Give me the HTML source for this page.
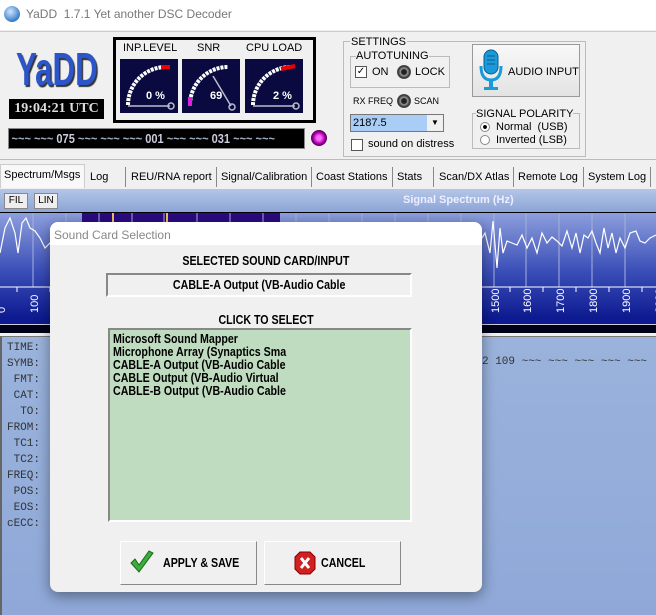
<!DOCTYPE html>
<html><head><meta charset="utf-8"><style>
*{margin:0;padding:0;box-sizing:border-box}
body{width:656px;height:615px;overflow:hidden;background:#f0f0f0;font-family:"Liberation Sans",sans-serif;font-size:12px;position:relative}
.a{position:absolute}
.narrow{font-family:"Liberation Sans",sans-serif;font-weight:bold}
.sq{display:inline-block;transform:scaleX(.82);white-space:nowrap}
.meter{position:absolute;top:59px;width:58px;height:54px;background:#0a0a40}
.tab{position:absolute;top:167px;height:20px;font-size:11px;line-height:20px;border-right:1px solid #888;padding:0 4px;white-space:nowrap;overflow:hidden}
.mono{font-family:"Liberation Mono",monospace;font-size:11px;color:#333}
</style></head><body>
<div class="a" style="left:0;top:0;width:656px;height:30px;background:#fff"></div>
<div class="a" style="left:4px;top:6px;width:16px;height:16px;border-radius:50%;background:radial-gradient(circle at 40% 35%,#cfe6ff,#3a7cc8 70%,#1d4f8f)"></div>
<div class="a" style="left:26px;top:7px;font-size:12px;color:#777">YaDD&nbsp; 1.7.1 Yet another DSC Decoder</div>
<div class="a" style="left:0;top:31px;width:656px;height:1px;background:#ccc"></div>
<div class="a" style="left:16px;top:42px;font-family:'Liberation Sans',sans-serif;font-weight:bold;font-size:46px;color:#2b55c8;text-shadow:2px 2px 1px #333;transform:scaleX(.68);transform-origin:left top;white-space:nowrap">YaDD</div>
<div class="a" style="left:9px;top:99px;width:95px;height:20px;background:#000;color:#ddd;font-family:'Liberation Serif',serif;font-weight:bold;font-size:14px;line-height:20px;text-align:center">19:04:21 UTC</div>
<div class="a" style="left:113px;top:37px;width:203px;height:86px;border:3px solid #000"></div>
<div class="a" style="left:123px;top:42px;font-size:11px">INP.LEVEL</div>
<div class="a" style="left:197px;top:42px;font-size:11px">SNR</div>
<div class="a" style="left:246px;top:42px;font-size:11px">CPU LOAD</div>
<div class="meter" style="left:120px"><svg width="58" height="54"><path d="M8 46 A38 38 0 0 1 46 8" stroke="#fff" stroke-width="4" fill="none" stroke-dasharray="3 1"/><path d="M41 8 L50 8" stroke="#e00" stroke-width="4"/><path d="M8 47 H50" stroke="#bbc" stroke-width="1.5"/><circle cx="51" cy="47" r="3" stroke="#bbc" fill="none" stroke-width="1.5"/><text x="26" y="40" fill="#fff" font-size="11" font-weight="bold" font-family="Liberation Sans">0 %</text></svg></div>
<div class="meter" style="left:182px"><svg width="58" height="54"><path d="M8 46 A38 38 0 0 1 46 8" stroke="#fff" stroke-width="4" fill="none" stroke-dasharray="3 1"/><path d="M8 47 V38" stroke="#e020e0" stroke-width="4"/><path d="M31 17 L49 47" stroke="#bbc" stroke-width="1.5"/><circle cx="50" cy="48" r="3" stroke="#bbc" fill="none" stroke-width="1.5"/><text x="28" y="40" fill="#fff" font-size="11" font-weight="bold" font-family="Liberation Sans">69</text></svg></div>
<div class="meter" style="left:245px"><svg width="58" height="54"><path d="M8 46 A38 38 0 0 1 46 8" stroke="#fff" stroke-width="4" fill="none" stroke-dasharray="3 1"/><path d="M36 10 L50 7" stroke="#e00" stroke-width="4"/><path d="M8 47 H50" stroke="#bbc" stroke-width="1.5"/><circle cx="51" cy="47" r="3" stroke="#bbc" fill="none" stroke-width="1.5"/><text x="28" y="40" fill="#fff" font-size="11" font-weight="bold" font-family="Liberation Sans">2 %</text></svg></div>
<div class="a" style="left:8px;top:128px;width:297px;height:21px;background:#000;border:1px solid #888;overflow:hidden"><div style="color:#9ab;font-weight:bold;font-size:13px;line-height:19px;padding-left:3px;white-space:nowrap;transform:scaleX(.85);transform-origin:left">~~~ ~~~ <span style="color:#ccd">075</span> ~~~ ~~~ ~~~ <span style="color:#ccd">001</span> ~~~ ~~~ <span style="color:#ccd">031</span> ~~~ ~~~</div></div>
<div class="a" style="left:311px;top:130px;width:16px;height:16px;border-radius:50%;background:radial-gradient(circle,#f6f 20%,#a0a 50%,#202 80%)"></div>
<div class="a" style="left:0;top:159px;width:656px;height:1px;background:#bbb"></div>
<div class="a" style="left:343px;top:41px;width:243px;height:116px;border:1px solid #bbb"></div>
<div class="a" style="left:350px;top:36px;background:#f0f0f0;font-size:11px;padding:0 1px">SETTINGS</div>
<div class="a" style="left:350px;top:56px;width:100px;height:32px;border:1px solid #bbb"></div>
<div class="a" style="left:356px;top:50px;background:#f0f0f0;font-size:11px">AUTOTUNING</div>
<div class="a" style="left:355px;top:66px;width:12px;height:12px;border:1px solid #555;background:#fff;font-size:10px;line-height:10px;text-align:center">✓</div>
<div class="a" style="left:372px;top:66px;font-size:11px">ON</div>
<div class="a" style="left:397px;top:65px;width:14px;height:14px;border-radius:50%;background:radial-gradient(circle,#222 25%,#999 35%,#333 60%,#777 80%)"></div>
<div class="a" style="left:415px;top:66px;font-size:11px">LOCK</div>
<div class="a" style="left:353px;top:96px;font-size:9px">RX FREQ</div>
<div class="a" style="left:397px;top:94px;width:14px;height:14px;border-radius:50%;background:radial-gradient(circle,#222 25%,#999 35%,#333 60%,#777 80%)"></div>
<div class="a" style="left:414px;top:96px;font-size:9px">SCAN</div>
<div class="a" style="left:350px;top:114px;width:94px;height:18px;border:1px solid #777;background:#a9cdf5;font-size:11px;line-height:16px;padding-left:2px">2187.5</div>
<div class="a" style="left:427px;top:115px;width:16px;height:16px;background:#f0f0f0;font-size:8px;text-align:center;line-height:16px">▼</div>
<div class="a" style="left:351px;top:139px;width:12px;height:12px;border:1px solid #555;background:#fff"></div>
<div class="a" style="left:368px;top:138px;font-size:11px">sound on distress</div>
<div class="a" style="left:472px;top:44px;width:108px;height:53px;border:1px solid #999;background:linear-gradient(#f8f8f8,#e3e3e3)"></div>
<svg class="a" style="left:478px;top:48px" width="26" height="46"><rect x="6" y="2" width="14" height="24" rx="7" fill="#1a9ad8" stroke="#0a5a90"/><path d="M9 8h8M9 12h8M9 16h8" stroke="#0a5a90"/><path d="M3 18 Q3 32 13 32 Q23 32 23 18" stroke="#1a9ad8" stroke-width="3" fill="none"/><rect x="11" y="32" width="4" height="7" fill="#1a9ad8"/><rect x="6" y="39" width="14" height="3" fill="#1a9ad8"/></svg>
<div class="a" style="left:508px;top:66px;font-size:11px">AUDIO INPUT</div>
<div class="a" style="left:472px;top:113px;width:108px;height:36px;border:1px solid #bbb"></div>
<div class="a" style="left:476px;top:108px;background:#f0f0f0;font-size:11px">SIGNAL POLARITY</div>
<div class="a" style="left:480px;top:122px;width:10px;height:10px;border:1px solid #888;border-radius:50%;background:radial-gradient(circle,#000 30%,#fff 40%)"></div>
<div class="a" style="left:496px;top:121px;font-size:11px">Normal&nbsp; (USB)</div>
<div class="a" style="left:480px;top:135px;width:10px;height:10px;border:1px solid #888;border-radius:50%;background:#fff"></div>
<div class="a" style="left:496px;top:134px;font-size:11px">Inverted (LSB)</div>
<div class="a" style="left:0;top:163px;width:656px;height:26px;background:#f0f0f0"></div>
<div class="a" style="left:0;top:164px;width:85px;height:24px;background:#f8f8f8;border:1px solid #ccc;border-bottom:none"></div>
<div class="a" style="left:4px;top:169px;font-size:11px">Spectrum/Msgs</div>
<div class="tab" style="left:86px;width:40px">Log</div>
<div class="tab" style="left:127px;width:90px">REU/RNA report</div>
<div class="tab" style="left:217px;width:95px">Signal/Calibration</div>
<div class="tab" style="left:312px;width:81px">Coast Stations</div>
<div class="tab" style="left:393px;width:41px">Stats</div>
<div class="tab" style="left:435px;width:79px">Scan/DX Atlas</div>
<div class="tab" style="left:514px;width:70px">Remote Log</div>
<div class="tab" style="left:584px;width:67px">System Log</div>
<div class="a" style="left:0;top:189px;width:656px;height:24px;background:linear-gradient(#b4c6e8,#8aa3d6)"></div>
<div class="a" style="left:4px;top:193px;width:24px;height:16px;background:#eee;border:1px solid #888;font-size:10px;text-align:center;line-height:14px">FIL</div>
<div class="a" style="left:34px;top:193px;width:24px;height:16px;background:#eee;border:1px solid #888;font-size:10px;text-align:center;line-height:14px">LIN</div>
<div class="a" style="left:403px;top:194px;color:#eef;font-size:11px;font-weight:bold">Signal Spectrum (Hz)</div>
<div class="a" style="left:0;top:212px;width:656px;height:1px;background:#000"></div>
<div class="a" style="left:0;top:213px;width:656px;height:105px;background:linear-gradient(#8d9fdd,#3b4fb8 55%,#0d1a90)"></div>
<div class="a" style="left:82px;top:213px;width:198px;height:15px;background:#2a0a80"></div>
<svg class="a" style="left:0;top:213px" width="656" height="105">
<g stroke="#a8b0d8" stroke-width="1">
<path d="M33 0V74M66 0V74M99 0V74M132 0V74M164 0V74M197 0V74M230 0V74M263 0V74M296 0V74M329 0V74M362 0V74M395 0V74M428 0V74M461 0V74M494 0V74M526 0V74M559 0V74M592 0V74M625 0V74"/>
</g>
<path d="M0 74H656" stroke="#fff"/>
<g stroke="#fff"><path d="M17 74v5M50 74v5M83 74v5M116 74v5M510 74v5M543 74v5M576 74v5M609 74v5M642 74v5"/></g>
<polyline fill="none" stroke="#fff" stroke-width="1.2" points="0,40 5,15 10,5 15,20 18,40 22,10 26,5 30,15 35,18 40,25 45,35 50,30 480,28 485,20 490,40 493,8 497,55 500,15 503,40 507,28 512,30 517,32 522,22 527,35 532,25 537,40 542,20 547,30 552,24 557,28 562,33 567,18 572,35 576,20 580,40 584,22 588,25 592,18 596,30 600,40 604,15 608,35 612,20 616,40 620,25 625,35 630,20 636,18 640,28 645,30 650,25 656,22"/>
<polyline fill="none" stroke="#f0c060" stroke-width="2" points="113,0 113,14"/><polyline fill="none" stroke="#f0c060" stroke-width="2" points="167,0 167,14"/>
<g fill="#fff" font-size="11" font-family="Liberation Sans">
<text transform="translate(38,100) rotate(-90)">100</text>
<text transform="translate(499,100) rotate(-90)">1500</text>
<text transform="translate(531,100) rotate(-90)">1600</text>
<text transform="translate(564,100) rotate(-90)">1700</text>
<text transform="translate(597,100) rotate(-90)">1800</text>
<text transform="translate(630,100) rotate(-90)">1900</text>
<text transform="translate(663,100) rotate(-90)">2000</text>
<text transform="translate(5,100) rotate(-90)">0</text>
</g></svg>
<div class="a" style="left:0;top:318px;width:656px;height:7px;background:#0d1a90"></div>
<div class="a" style="left:0;top:324px;width:656px;height:1px;background:#ccd"></div>
<div class="a" style="left:0;top:325px;width:656px;height:8px;background:#000018"></div>
<div class="a" style="left:0;top:333px;width:656px;height:3px;background:#f0f0f0"></div>
<div class="a" style="left:0;top:336px;width:656px;height:279px;background:linear-gradient(#9ab3dc,#8fa8d8);border-left:2px solid #666;border-top:1px solid #777"></div>
<div class="a mono" style="left:4px;top:340px;line-height:16px;text-align:right;width:36px">TIME:<br>SYMB:<br>FMT:<br>CAT:<br>TO:<br>FROM:<br>TC1:<br>TC2:<br>FREQ:<br>POS:<br>EOS:<br>cECC:</div>
<div class="a mono" style="left:482px;top:356px;white-space:nowrap">2 109 ~~~ ~~~ ~~~ ~~~ ~~~</div>
<div class="a" style="left:50px;top:222px;width:432px;height:370px;background:#f0f0f0;border-radius:8px;box-shadow:0 4px 14px rgba(0,0,0,.4);overflow:hidden">
<div style="height:23px;background:#fff;color:#888;font-size:12px;padding:6px 0 0 4px">Sound Card Selection</div>
</div>
<div class="a narrow" style="left:50px;top:253px;width:432px;text-align:center;font-size:13px"><span class="sq">SELECTED SOUND CARD/INPUT</span></div>
<div class="a narrow" style="left:106px;top:273px;width:306px;height:24px;border:2px solid;border-color:#888 #fff #fff #888;text-align:center;font-size:13px;line-height:20px"><span class="sq">CABLE-A Output (VB-Audio Cable</span></div>
<div class="a narrow" style="left:50px;top:312px;width:432px;text-align:center;font-size:13px"><span class="sq">CLICK TO SELECT</span></div>
<div class="a narrow" style="left:108px;top:328px;width:304px;height:194px;background:#c0dcc0;border:2px solid;border-color:#888 #fff #fff #888;font-size:13px;line-height:13px;padding:2px 0 0 3px"><div style="transform:scaleX(.82);transform-origin:left top;white-space:nowrap">Microsoft Sound Mapper<br>Microphone Array (Synaptics Sma<br>CABLE-A Output (VB-Audio Cable<br>CABLE Output (VB-Audio Virtual<br>CABLE-B Output (VB-Audio Cable</div></div>
<div class="a" style="left:120px;top:541px;width:137px;height:44px;background:#f0f0f0;border:1px solid;border-color:#fff #888 #888 #fff"></div>
<svg class="a" style="left:129px;top:550px" width="26" height="24"><path d="M2 13 L10 22 L24 3 L20 1 L10 15 L6 9 Z" fill="#3cac3c" stroke="#1a6a1a"/></svg>
<div class="a narrow" style="left:163px;top:555px;font-size:13px"><span class="sq" style="transform-origin:left">APPLY &amp; SAVE</span></div>
<div class="a" style="left:264px;top:541px;width:137px;height:44px;background:#f0f0f0;border:1px solid;border-color:#fff #888 #888 #fff"></div>
<svg class="a" style="left:294px;top:551px" width="22" height="24"><polygon points="6,1 16,1 21,6 21,18 16,23 6,23 1,18 1,6" fill="#d02020" stroke="#800"/><path d="M7 7 L15 17 M15 7 L7 17" stroke="#fff" stroke-width="3"/></svg>
<div class="a narrow" style="left:321px;top:555px;font-size:13px"><span class="sq" style="transform-origin:left">CANCEL</span></div>
</body></html>
